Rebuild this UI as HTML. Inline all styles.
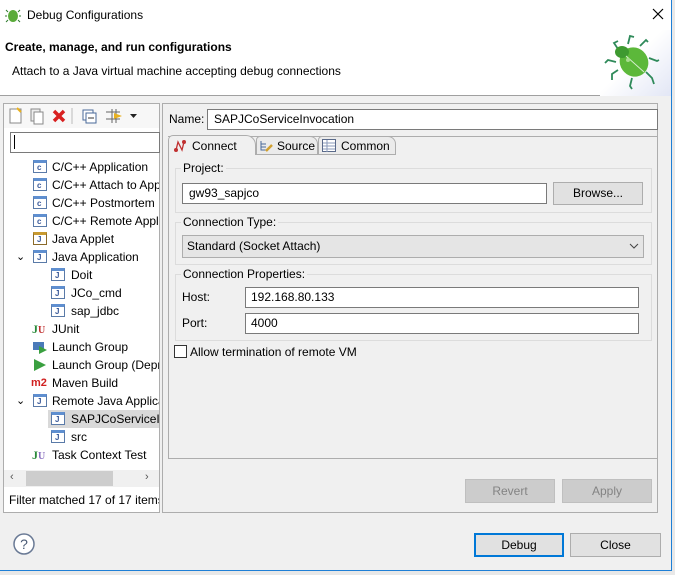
<!DOCTYPE html>
<html><head><meta charset="utf-8"><style>
*{box-sizing:border-box;margin:0;padding:0}
body{width:675px;height:575px;position:relative;overflow:hidden;background:#e8e8e8;font-family:"Liberation Sans",Arial,sans-serif;font-size:12px;color:#000}
.a{position:absolute}
.win{position:absolute;left:0;top:0;width:672px;height:571px;background:#f0f0f0;border-right:1px solid #1e7fd6;border-bottom:1px solid #1e7fd6}
.inp{position:absolute;background:#fff;border:1px solid #7a7a7a;padding-left:6px;line-height:19px;font-size:12px}
.btn{position:absolute;background:#e1e1e1;border:1px solid #adadad;text-align:center;font-size:12px}
.grp{position:absolute;border:1px solid #dcdcdc}
.lbl{position:absolute;background:#f0f0f0;padding:0 2px;font-size:12px}
.row{position:absolute;height:18px;line-height:18px;white-space:nowrap;font-size:12px}
.ic{position:absolute;width:14px;height:13px;border:1px solid #5a7aa8;background:#fff;border-top:3px solid #5f8fd0}
.ic i{position:absolute;left:3px;top:0;font-size:8px;font-style:normal;font-weight:bold;color:#3a5a9a;line-height:9px}
</style></head><body>
<div class="win">
 <div class="a" style="left:0;top:0;width:671px;height:96px;background:#fff;border-bottom:1px solid #a0a0a0"></div>
 <svg class="a" style="left:5px;top:7px" width="16" height="16"><ellipse cx="8" cy="9" rx="5" ry="6" fill="#5aab3a"/><path d="M3 5l-2-2M13 5l2-2M2 9H0M14 9h2M3 13l-2 2M13 13l2 2" stroke="#2d7a2d"/></svg>
 <div class="a" style="left:27px;top:8px;font-size:12px">Debug Configurations</div>
 <svg class="a" style="left:652px;top:8px" width="12" height="12"><path d="M1 1L11 11M11 1L1 11" stroke="#000" stroke-width="1.2"/></svg>
 <div class="a" style="left:5px;top:40px;font-weight:bold;font-size:12px">Create, manage, and run configurations</div>
 <div class="a" style="left:12px;top:64px;font-size:12px">Attach to a Java virtual machine accepting debug connections</div>
 <div class="a" style="left:600px;top:30px;width:71px;height:66px;background:linear-gradient(135deg,#fff 45%,#e2e6f5)"></div>
 <svg class="a" style="left:600px;top:32px" width="64" height="60">
  <g stroke="#2f8a5a" stroke-width="1.8" fill="none">
   <path d="M18 17l-4-6 4-2"/><path d="M28 12l2-8 4 1"/>
   <path d="M40 14l6-6 2 2"/><path d="M49 26l8 3 2-1"/>
   <path d="M46 40l6 6 2 6"/><path d="M32 46l-2 8 2 3"/>
   <path d="M16 30l-8 -2-3 3"/><path d="M18 38l-6 4 0 6"/>
  </g>
  <ellipse cx="34" cy="30" rx="14" ry="15" fill="#5cb83a" transform="rotate(-35 34 30)"/>
  <ellipse cx="22" cy="20" rx="7" ry="6" fill="#3e9a30"/>
  <path d="M26 24L44 40" stroke="#d8efd0" stroke-width="1"/>
  <circle cx="28" cy="28" r="2" fill="#a8dc90"/>
 </svg>
 <!-- left panel -->
 <div class="a" style="left:3px;top:103px;width:157px;height:410px;background:#fff;border:1px solid #adadad"></div>
 <div class="a" style="left:4px;top:104px;width:155px;height:24px;background:#f7f7f7"></div>
 <svg class="a" style="left:8px;top:107px" width="135" height="18">
  <rect x="2" y="2" width="11" height="14" fill="#fff" stroke="#888"/><path d="M9 1l4 4" stroke="#e8b020" stroke-width="2"/>
  <rect x="23" y="2" width="9" height="12" fill="#eee" stroke="#888"/><rect x="26" y="5" width="9" height="12" fill="#fff" stroke="#888"/>
  <path d="M46 4l10 10M56 4L46 14" stroke="#d82020" stroke-width="3.5"/>
  <path d="M64 1v16" stroke="#bbb"/>
  <rect x="75" y="3" width="10" height="10" fill="#fff" stroke="#4a6a9a"/><rect x="78" y="6" width="10" height="10" fill="#fff" stroke="#4a6a9a"/><path d="M80 11h6" stroke="#333"/>
  <path d="M98 5h14M98 12h14M104 2v14M108 2v14" stroke="#666"/><path d="M106 6l8 3-8 3z" fill="#e8b020"/>
  <path d="M122 7h7l-3.5 4z" fill="#222"/>
 </svg>
 <div class="a" style="left:10px;top:132px;width:150px;height:21px;border:1px solid #7a7a7a;background:#fff"></div>
 <div class="a" style="left:14px;top:135px;width:1px;height:14px;background:#000"></div>
 <div class="a" style="left:4px;top:158px;width:155px;height:310px;overflow:hidden">
  <div class="ic" style="left:29px;top:2px"><i>c</i></div><div class="row" style="left:48px;top:0">C/C++ Application</div>
  <div class="ic" style="left:29px;top:20px"><i>c</i></div><div class="row" style="left:48px;top:18px">C/C++ Attach to Application</div>
  <div class="ic" style="left:29px;top:38px"><i>c</i></div><div class="row" style="left:48px;top:36px">C/C++ Postmortem</div>
  <div class="ic" style="left:29px;top:56px"><i>c</i></div><div class="row" style="left:48px;top:54px">C/C++ Remote Application</div>
  <div class="ic" style="left:29px;top:74px;border-color:#8a6a2a;border-top-color:#c89a30"><i>J</i></div><div class="row" style="left:48px;top:72px">Java Applet</div>
  <div class="row" style="left:12px;top:90px;font-size:11px">⌄</div>
  <div class="ic" style="left:29px;top:92px"><i>J</i></div><div class="row" style="left:48px;top:90px">Java Application</div>
  <div class="ic" style="left:47px;top:110px"><i>J</i></div><div class="row" style="left:67px;top:108px">Doit</div>
  <div class="ic" style="left:47px;top:128px"><i>J</i></div><div class="row" style="left:67px;top:126px">JCo_cmd</div>
  <div class="ic" style="left:47px;top:146px"><i>J</i></div><div class="row" style="left:67px;top:144px">sap_jdbc</div>
  <div class="row" style="left:28px;top:162px;color:#2a8a3a;font-weight:bold;font-family:'Liberation Serif',serif">J<span style="color:#c03030;font-size:10px">U</span></div><div class="row" style="left:48px;top:162px">JUnit</div>
  <svg class="a" style="left:28px;top:182px" width="16" height="14"><rect x="1" y="2" width="11" height="8" fill="#4a7ab8"/><path d="M7 6l8 4-8 4z" fill="#3aa040"/></svg><div class="row" style="left:48px;top:180px">Launch Group</div>
  <svg class="a" style="left:28px;top:200px" width="16" height="14"><path d="M2 1l12 6-12 6z" fill="#3aa040"/></svg><div class="row" style="left:48px;top:198px">Launch Group (Deprecated)</div>
  <div class="row" style="left:27px;top:216px;color:#d02020;font-weight:bold;font-size:11px">m2</div><div class="row" style="left:48px;top:216px">Maven Build</div>
  <div class="row" style="left:12px;top:234px;font-size:11px">⌄</div>
  <div class="ic" style="left:29px;top:236px"><i>J</i></div><div class="row" style="left:48px;top:234px">Remote Java Application</div>
  <div class="a" style="left:44px;top:252px;width:111px;height:18px;background:#d9d9d9"></div>
  <div class="ic" style="left:47px;top:254px"><i>J</i></div><div class="row" style="left:67px;top:252px">SAPJCoServiceInvocation</div>
  <div class="ic" style="left:47px;top:272px"><i>J</i></div><div class="row" style="left:67px;top:270px">src</div>
  <div class="row" style="left:28px;top:288px;color:#2a8a3a;font-weight:bold;font-family:'Liberation Serif',serif">J<span style="color:#8a70c0;font-size:10px">U</span></div><div class="row" style="left:48px;top:288px">Task Context Test</div>
 </div>
 <div class="a" style="left:4px;top:470px;width:155px;height:17px;background:#f0f0f0"></div>
 <div class="a" style="left:26px;top:471px;width:87px;height:15px;background:#cdcdcd"></div>
 <div class="a" style="left:10px;top:471px;font-size:11px;color:#555">‹</div>
 <div class="a" style="left:145px;top:471px;font-size:11px;color:#555">›</div>
 <div class="a" style="left:9px;top:493px;font-size:12px;white-space:nowrap;width:150px;overflow:hidden">Filter matched 17 of 17 items</div>
 <!-- right panel -->
 <div class="a" style="left:162px;top:103px;width:496px;height:410px;border:1px solid #adadad"></div>
 <div class="a" style="left:169px;top:112px">Name:</div>
 <div class="inp" style="left:207px;top:109px;width:451px;height:21px">SAPJCoServiceInvocation</div>
 <div class="a" style="left:168px;top:155px;width:490px;height:304px;border:1px solid #adadad;border-top:none"></div>
 <div class="a" style="left:168px;top:136px;width:490px;height:20px;border-top:1px solid #adadad"></div>
 <div class="a" style="left:168px;top:135px;width:88px;height:21px;background:#f0f0f0;border:1px solid #adadad;border-bottom:none;border-radius:5px 10px 0 0"></div>
 <div class="a" style="left:256px;top:136px;width:62px;height:19px;border:1px solid #adadad;border-radius:4px 8px 0 0;background:#ebebeb"></div>
 <div class="a" style="left:318px;top:136px;width:78px;height:19px;border:1px solid #adadad;border-radius:4px 8px 0 0;background:#ebebeb"></div>
 <div class="a" style="left:169px;top:155px;width:87px;height:2px;background:#f0f0f0"></div>
 <svg class="a" style="left:173px;top:139px" width="14" height="14"><path d="M3 11L5 3 9 11 11 3" stroke="#c03030" stroke-width="1.3" fill="none"/><circle cx="3" cy="11" r="2" fill="#c03030"/><circle cx="11" cy="3" r="2" fill="#c03030"/></svg>
 <div class="a" style="left:192px;top:139px">Connect</div>
 <svg class="a" style="left:259px;top:139px" width="14" height="14"><path d="M2 2v9h5M2 5h5M2 8h5" stroke="#4a6a9a" fill="none"/><path d="M7 12l6-6" stroke="#d0a030" stroke-width="2.5"/></svg>
 <div class="a" style="left:277px;top:139px">Source</div>
 <svg class="a" style="left:322px;top:139px" width="14" height="13"><rect x="0.5" y="0.5" width="13" height="12" fill="#fff" stroke="#5a6a8a"/><path d="M1 4h12M1 7h12M1 10h12M5 1v12" stroke="#8a9aba"/></svg>
 <div class="a" style="left:341px;top:139px">Common</div>
 <div class="grp" style="left:175px;top:168px;width:477px;height:45px"></div>
 <div class="lbl" style="left:181px;top:161px">Project:</div>
 <div class="inp" style="left:182px;top:183px;width:365px;height:21px">gw93_sapjco</div>
 <div class="btn" style="left:553px;top:182px;width:90px;height:23px;line-height:21px">Browse...</div>
 <div class="grp" style="left:175px;top:222px;width:477px;height:43px"></div>
 <div class="lbl" style="left:181px;top:215px">Connection Type:</div>
 <div class="a" style="left:182px;top:235px;width:462px;height:23px;background:#e5e5e5;border:1px solid #adadad;padding-left:4px;line-height:21px">Standard (Socket Attach)</div>
 <svg class="a" style="left:629px;top:242px" width="10" height="8"><path d="M1 2l4 4 4-4" stroke="#444" fill="none"/></svg>
 <div class="grp" style="left:175px;top:274px;width:477px;height:67px"></div>
 <div class="lbl" style="left:181px;top:267px">Connection Properties:</div>
 <div class="a" style="left:182px;top:290px">Host:</div>
 <div class="inp" style="left:245px;top:287px;width:394px;height:21px;padding-left:5px">192.168.80.133</div>
 <div class="a" style="left:182px;top:316px">Port:</div>
 <div class="inp" style="left:245px;top:313px;width:394px;height:21px;padding-left:5px">4000</div>
 <div class="a" style="left:174px;top:345px;width:13px;height:13px;background:#fff;border:1px solid #333"></div>
 <div class="a" style="left:190px;top:345px">Allow termination of remote VM</div>
 <div class="btn" style="left:465px;top:479px;width:90px;height:24px;line-height:22px;background:#ccc;border-color:#bfbfbf;color:#838383">Revert</div>
 <div class="btn" style="left:562px;top:479px;width:90px;height:24px;line-height:22px;background:#ccc;border-color:#bfbfbf;color:#838383">Apply</div>
 <svg class="a" style="left:12px;top:532px" width="24" height="24"><circle cx="12" cy="12" r="10" fill="#fff" stroke="#6a7a95" stroke-width="1.5"/><text x="12" y="17" text-anchor="middle" font-family="Liberation Sans" font-size="14" fill="#4a5a75">?</text></svg>
 <div class="btn" style="left:474px;top:533px;width:90px;height:24px;line-height:20px;border:2px solid #0078d7">Debug</div>
 <div class="btn" style="left:570px;top:533px;width:91px;height:24px;line-height:22px">Close</div>
</div>
</body></html>
